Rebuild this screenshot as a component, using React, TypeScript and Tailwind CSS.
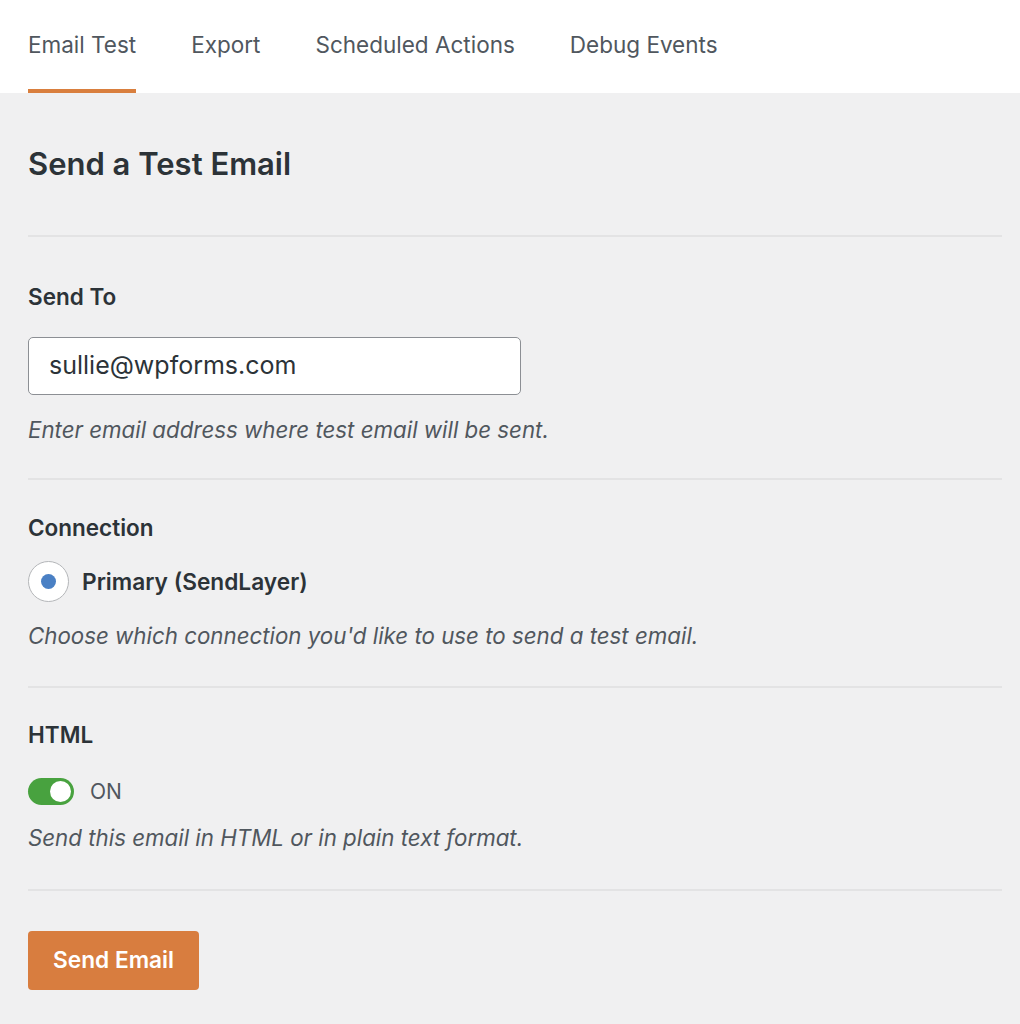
import React from "react";

const font = { fontFamily: "Inter, 'Noto Sans', 'Liberation Sans', sans-serif" };

export default function App() {
  const tabs = ["Email Test", "Export", "Scheduled Actions", "Debug Events"];
  return (
    <div className="min-h-[1024px] w-[1020px] bg-[#f0f0f1]" style={font}>
      <div className="flex h-[93px] gap-[55px] bg-white px-[28px]">
        {tabs.map((t, i) => (
          <div
            key={t}
            className={
              "flex items-start border-b-4 pt-[31px] text-[22.5px] leading-[28px] text-[#50575e] " +
              (i === 0 ? "border-[#d97f3e]" : "border-transparent")
            }
          >
            {t}
          </div>
        ))}
      </div>

      <div className="mr-[18px] pl-[28px]">
        <h1 className="pt-[53px] text-[31px] font-semibold leading-[36px] text-[#2c3338]">
          Send a Test Email
        </h1>
        <div className="mt-[53px] h-[2px] bg-[#e3e3e4]" />

        <div className="pt-[46px]">
          <div className="text-[22.5px] font-semibold leading-[28px] text-[#2c3338]">Send To</div>
          <div className="mt-[26px] flex h-[58px] w-[493px] items-center rounded-[5px] border border-[#8c8f94] bg-white px-[20px] text-[25px] text-[#2c3338]">
            sullie@wpforms.com
          </div>
          <div className="mt-[21px] text-[22.3px] italic leading-[28px] text-[#50575e]">
            Enter email address where test email will be sent.
          </div>
        </div>
        <div className="mt-[34px] h-[2px] bg-[#e3e3e4]" />

        <div className="pt-[34px]">
          <div className="text-[22.5px] font-semibold leading-[28px] text-[#2c3338]">Connection</div>
          <div className="mt-[19px] flex items-center gap-[13px]">
            <div className="flex h-[41px] w-[41px] items-center justify-center rounded-full border border-[#b4b6b9] bg-white">
              <div className="h-[15px] w-[15px] rounded-full bg-[#4a80c4]" />
            </div>
            <div className="text-[22.7px] font-semibold leading-[28px] text-[#2c3338]">Primary (SendLayer)</div>
          </div>
          <div className="mt-[20px] text-[22.3px] italic leading-[28px] text-[#50575e]">
            Choose which connection you'd like to use to send a test email.
          </div>
        </div>
        <div className="mt-[36px] h-[2px] bg-[#e3e3e4]" />

        <div className="pt-[33px]">
          <div className="text-[22.5px] font-semibold leading-[28px] text-[#2c3338]">HTML</div>
          <div className="mt-[29px] flex items-center gap-[16px]">
            <div className="flex h-[27px] w-[46px] items-center justify-end rounded-full bg-[#48a23f] pr-[3px]">
              <div className="h-[21px] w-[21px] rounded-full bg-white" />
            </div>
            <div className="text-[21px] leading-[27px] text-[#50575e]">ON</div>
          </div>
          <div className="mt-[19px] text-[22.3px] italic leading-[28px] text-[#50575e]">
            Send this email in HTML or in plain text format.
          </div>
        </div>
        <div className="mt-[37px] h-[2px] bg-[#e3e3e4]" />

        <div className="pt-[40px]">
          <div className="flex h-[59px] w-[171px] items-center justify-center rounded-[4px] bg-[#d87d3f] text-[22.7px] font-semibold text-white">
            Send Email
          </div>
        </div>
      </div>
    </div>
  );
}
